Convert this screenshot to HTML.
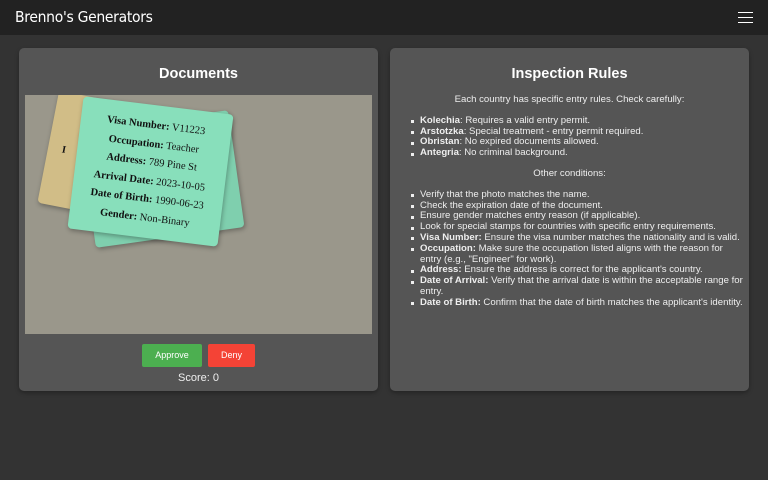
<!DOCTYPE html>
<html><head><style>
*{margin:0;padding:0;box-sizing:border-box}
body{width:768px;height:480px;background:#333;font-family:"Liberation Sans",sans-serif;color:#eee;position:relative;overflow:hidden}
.hdr{position:absolute;left:0;top:0;width:768px;height:35px;background:#222}
.hdr .t{position:absolute;left:15px;top:8px;font-size:15.5px;color:#fff;font-family:"DejaVu Sans Condensed","DejaVu Sans",sans-serif;letter-spacing:-0.3px}
.hb{position:absolute;left:738px;width:15px;height:1.3px;background:#fff}
.panel{position:absolute;top:48px;width:359px;height:343px;background:#555;border-radius:5px;box-shadow:0 2px 4px rgba(0,0,0,.3)}
h2{font-size:14.5px;text-align:center;color:#fff;position:absolute;left:0;right:0;top:18px}
.area{position:absolute;left:6px;top:47px;width:347px;height:239px;background:#9a978b;overflow:hidden}
.card{position:absolute;border-radius:4px;box-shadow:1px 2px 5px rgba(0,0,0,.3)}
.front{font-family:"Liberation Serif",serif;font-size:10.5px;color:#111;text-align:center;line-height:18.5px;padding-top:12px}
.btn{position:absolute;top:296px;height:23px;color:#fff;font-size:9px;text-align:center;line-height:23px;border-radius:2px}
.r{font-size:9.6px;color:#eee;line-height:10.8px}
ul{list-style:none}
li{position:relative;padding-left:30px}
li:before{content:"";position:absolute;left:21px;top:4.5px;width:3px;height:3px;background:#eee}
</style></head><body>
<div class="hdr"><div class="t">Brenno's Generators</div>
<div class="hb" style="top:12px"></div><div class="hb" style="top:17px"></div><div class="hb" style="top:22px"></div></div>

<div class="panel" style="left:19px">
<h2>Documents</h2>
<div class="area">
 <div class="card" style="left:22px;top:8px;width:140px;height:114px;background:#d1bd87;transform:rotate(11deg)"><div style="position:absolute;left:14px;top:52px;font:bold 10px 'Liberation Serif',serif;color:#111">I</div></div>
 <div class="card" style="left:62px;top:25px;width:150px;height:118px;background:#7fcfae;transform:rotate(-8deg)"></div>
 <div class="card front" style="left:50px;top:10px;width:151px;height:133px;background:#88dfbb;transform:rotate(7deg)">
 <div><b>Visa Number:</b> V11223</div><div><b>Occupation:</b> Teacher</div><div><b>Address:</b> 789 Pine St</div><div><b>Arrival Date:</b> 2023-10-05</div><div><b>Date of Birth:</b> 1990-06-23</div><div><b>Gender:</b> Non-Binary</div></div>
</div>
<div class="btn" style="left:123px;width:60px;background:#4caf50">Approve</div>
<div class="btn" style="left:189px;width:47px;background:#f44336">Deny</div>
<div style="position:absolute;left:0;right:0;top:324px;text-align:center;font-size:11px;color:#eee">Score: 0</div>
</div>

<div class="panel" style="left:390px">
<h2>Inspection Rules</h2>
<div class="r" style="position:absolute;left:0;right:0;top:47px">
<div style="text-align:center;margin-bottom:10px">Each country has specific entry rules. Check carefully:</div>
<ul><li><b>Kolechia</b>: Requires a valid entry permit.</li><li><b>Arstotzka</b>: Special treatment - entry permit required.</li><li><b>Obristan</b>: No expired documents allowed.</li><li><b>Antegria</b>: No criminal background.</li></ul>
<div style="text-align:center;margin:10px 0 10px">Other conditions:</div>
<ul><li>Verify that the photo matches the name.</li><li>Check the expiration date of the document.</li><li>Ensure gender matches entry reason (if applicable).</li><li>Look for special stamps for countries with specific entry requirements.</li><li><b>Visa Number:</b> Ensure the visa number matches the nationality and is valid.</li><li style="padding-right:20px"><b>Occupation:</b> Make sure the occupation listed aligns with the reason for entry (e.g., "Engineer" for work).</li><li><b>Address:</b> Ensure the address is correct for the applicant's country.</li><li style="padding-right:2px"><b>Date of Arrival:</b> Verify that the arrival date is within the acceptable range for entry.</li><li><b>Date of Birth:</b> Confirm that the date of birth matches the applicant's identity.</li></ul>
</div>
</div>
</body></html>
